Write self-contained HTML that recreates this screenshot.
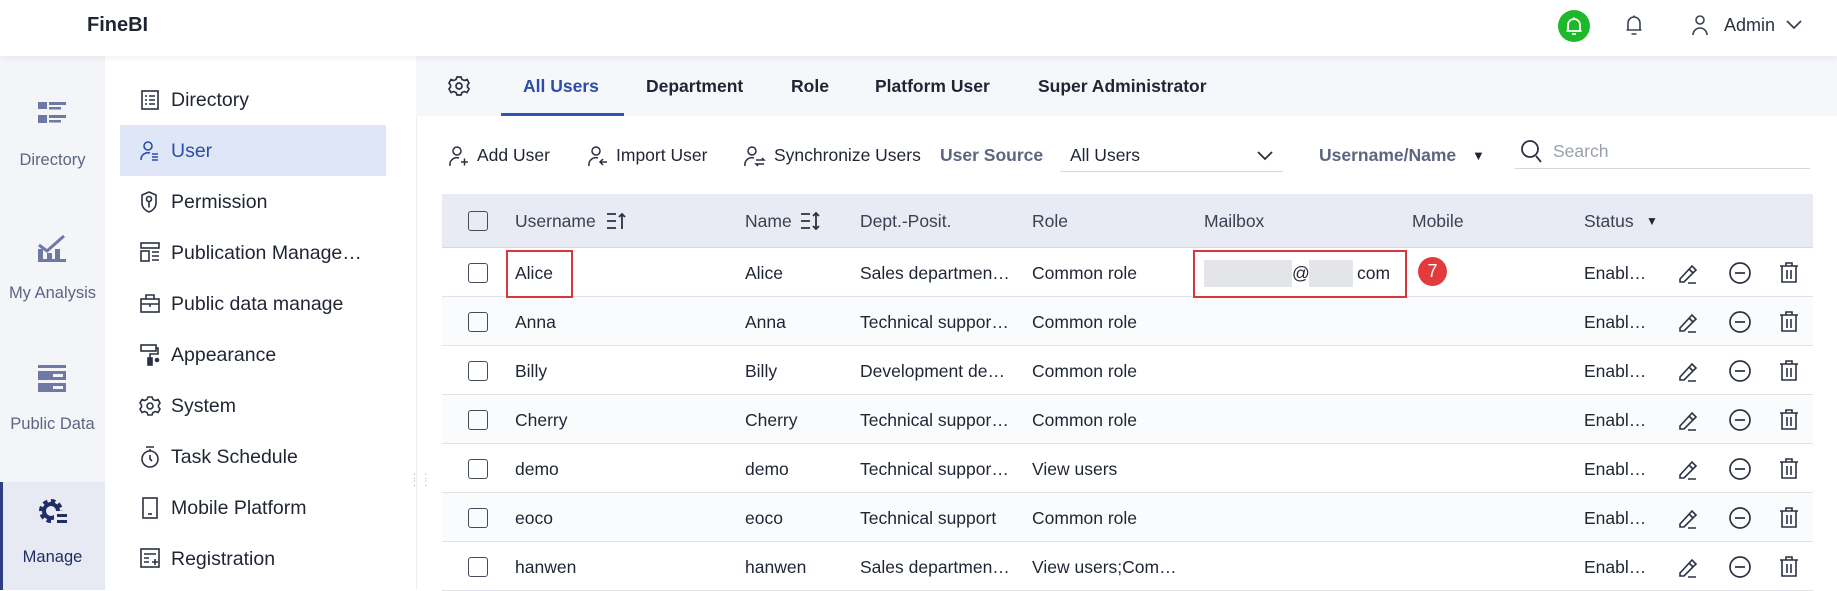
<!DOCTYPE html>
<html><head><meta charset="utf-8"><style>
*{margin:0;padding:0;box-sizing:border-box}
body{width:1837px;height:590px;overflow:hidden;background:#fff;font-family:"Liberation Sans",Arial,sans-serif;color:#1f2533;position:relative}
.a{position:absolute;white-space:nowrap}
svg{position:absolute;overflow:visible}
.hdr{left:0;top:0;width:1837px;height:56px;background:#fff;box-shadow:0 2px 6px rgba(0,0,0,.06);z-index:2}
.rail{left:0;top:56px;width:105px;height:534px;background:#f3f5f9}
.rl{font-size:16.5px;color:#5d6680;width:105px;text-align:center;left:0}
.side{left:105px;top:56px;width:311px;height:534px;background:#fff}
.si{font-size:19.5px;left:171px;color:#1f2533}
.tabs{left:416px;top:56px;width:1421px;height:60px;background:#f5f7fb}
.tab{font-size:17.5px;font-weight:bold;top:76px;color:#1f2533}
.tb{font-size:17.5px;top:145px;color:#1f2533}
.th{font-size:17.5px;color:#3a4152;top:211px}
.td{font-size:17.5px;color:#1f2533}
.cb{width:20px;height:20px;border:1.5px solid #444b5a;border-radius:3px;left:468px}
.row{left:442px;width:1371px;height:49px;border-bottom:1px solid #dfe2e8}
</style></head><body>
<div class="a hdr"></div>
<div class="a" style="left:87px;top:14px;font-size:20px;font-weight:bold;z-index:3">FineBI</div>
<div class="a" style="left:1558px;top:10px;width:32px;height:32px;border-radius:50%;background:#1fb82a;z-index:3"></div>
<svg style="left:1564px;top:16px;z-index:4" width="20" height="20" viewBox="0 0 20 20" fill="none" stroke="#fff" stroke-width="1.8"><path d="M4 15V9a6 6 0 0 1 12 0v6zM2.5 15h15M8 18h4M10 3V1.5"/></svg>
<svg style="left:1624px;top:14px;z-index:4" width="20" height="22" viewBox="0 0 20 22" fill="none" stroke="#3a4152" stroke-width="1.6"><path d="M4 16V9a6 6 0 0 1 12 0v7zM2.5 16h15M7.5 20h5M10 3V1.5"/></svg>
<svg style="left:1690px;top:14px;z-index:4" width="20" height="22" viewBox="0 0 20 22" fill="none" stroke="#3a4152" stroke-width="1.6"><circle cx="10" cy="6" r="4"/><path d="M3 21a7 7 0 0 1 14 0"/></svg>
<div class="a" style="left:1724px;top:15px;font-size:18px;color:#2b3140;z-index:4">Admin</div>
<svg style="left:1786px;top:20px;z-index:4" width="16" height="10" viewBox="0 0 16 10" fill="none" stroke="#3a4152" stroke-width="1.8"><path d="M1 1l7 7 7-7"/></svg>

<div class="a rail"></div>
<svg style="left:38px;top:102px" width="28" height="24" viewBox="0 0 28 24" fill="#6e7aa3"><rect x="0" y="0" width="9" height="7"/><rect x="11" y="0" width="17" height="3"/><rect x="11" y="5" width="12" height="2.5"/><rect x="0" y="13" width="9" height="8"/><rect x="11" y="13" width="17" height="3"/><rect x="11" y="18" width="12" height="2.5"/></svg>
<div class="a rl" style="top:151px">Directory</div>
<svg style="left:38px;top:234px" width="28" height="28" viewBox="0 0 28 28" fill="#6e7aa3"><path d="M1 11l8 6 9-8 8-7" stroke="#6e7aa3" stroke-width="3" fill="none"/><rect x="0" y="15" width="5" height="10"/><rect x="9" y="19" width="5" height="6"/><rect x="17" y="15" width="5" height="10"/><rect x="0" y="25" width="28" height="3"/></svg>
<div class="a rl" style="top:284px">My Analysis</div>
<svg style="left:38px;top:365px" width="28" height="28" viewBox="0 0 28 28" fill="#6e7aa3"><rect x="0" y="0" width="28" height="3"/><rect x="0" y="6" width="28" height="9"/><rect x="0" y="18" width="28" height="9"/><rect x="15" y="9" width="10" height="3" fill="#f3f5f9"/><rect x="15" y="21" width="10" height="3" fill="#f3f5f9"/></svg>
<div class="a rl" style="top:415px">Public Data</div>
<div class="a" style="left:0;top:482px;width:105px;height:108px;background:#e7eaf3"></div>
<div class="a" style="left:0;top:482px;width:3px;height:108px;background:#2b3f7e"></div>
<svg style="left:38px;top:498px" width="30" height="28" viewBox="0 0 30 28"><circle cx="13" cy="13" r="9" fill="none" stroke="#1f2f66" stroke-width="6" stroke-dasharray="4 3"/><circle cx="13" cy="13" r="7" fill="none" stroke="#1f2f66" stroke-width="4"/><rect x="16" y="13" width="14" height="15" fill="#e7eaf3"/><rect x="19" y="16" width="10" height="3" fill="#1f2f66"/><rect x="19" y="22" width="10" height="3" fill="#1f2f66"/></svg>
<div class="a rl" style="top:548px;color:#1f2f66">Manage</div>

<div class="a side"></div>
<div class="a" style="left:120px;top:125px;width:266px;height:51px;background:#dfe6f7"></div>
<svg style="left:141px;top:90px" width="18" height="20" viewBox="0 0 18 20" fill="none" stroke="#2b3140" stroke-width="1.6"><rect x="1" y="1" width="16" height="18"/><path d="M4 6h2M8 6h6M4 10h2M8 10h6M4 14h2M8 14h6"/></svg>
<div class="a si" style="top:89px">Directory</div>
<svg style="left:140px;top:140px" width="20" height="22" viewBox="0 0 20 22" fill="none" stroke="#2d4ea8" stroke-width="1.6"><circle cx="8" cy="6" r="4"/><path d="M1 20a7 7 0 0 1 9-7M12 14h6M12 17h6M12 20h6"/></svg>
<div class="a si" style="top:140px;color:#2d4ea8">User</div>
<svg style="left:140px;top:191px" width="18" height="22" viewBox="0 0 18 22" fill="none" stroke="#2b3140" stroke-width="1.6"><path d="M9 1l7 3v8c0 5-4 8-7 9-3-1-7-4-7-9V4z"/><circle cx="9" cy="8" r="2.5"/><path d="M9 10.5v6"/></svg>
<div class="a si" style="top:191px">Permission</div>
<svg style="left:140px;top:242px" width="20" height="20" viewBox="0 0 20 20" fill="none" stroke="#2b3140" stroke-width="1.6"><rect x="1" y="1" width="18" height="5"/><rect x="1" y="9" width="8" height="10"/><path d="M12 10h7M12 14h7M12 18h7"/></svg>
<div class="a si" style="top:242px">Publication Manage…</div>
<svg style="left:140px;top:293px" width="20" height="20" viewBox="0 0 20 20" fill="none" stroke="#2b3140" stroke-width="1.6"><rect x="1" y="6" width="18" height="13"/><path d="M6 6V2h8v4M1 11h18M10 11v3"/></svg>
<div class="a si" style="top:293px">Public data manage</div>
<svg style="left:140px;top:344px" width="20" height="22" viewBox="0 0 20 22" fill="none" stroke="#2b3140" stroke-width="1.6"><rect x="1" y="1" width="15" height="6"/><path d="M16 4h2v6h-8v4"/><rect x="8" y="14" width="4" height="7" fill="#2b3140"/><circle cx="17" cy="16" r="1.5" fill="#2b3140"/></svg>
<div class="a si" style="top:344px">Appearance</div>
<svg style="left:140px;top:396px" width="20" height="20" viewBox="0 0 20 20" fill="none" stroke="#2b3140" stroke-width="1.6"><path d="M8 1h4l1 2.5 2.5 1 2.5-1 2 3.5-1.5 2v2l1.5 2-2 3.5-2.5-1-2.5 1-1 2.5H8l-1-2.5-2.5-1-2.5 1-2-3.5 1.5-2v-2L0 7l2-3.5 2.5 1L7 3.5z"/><circle cx="10" cy="10" r="3"/></svg>
<div class="a si" style="top:395px">System</div>
<svg style="left:140px;top:446px" width="20" height="22" viewBox="0 0 20 22" fill="none" stroke="#2b3140" stroke-width="1.6"><circle cx="10" cy="13" r="8"/><path d="M6 1h8M10 3v2M10 9v4l2 2"/></svg>
<div class="a si" style="top:446px">Task Schedule</div>
<svg style="left:142px;top:497px" width="16" height="22" viewBox="0 0 16 22" fill="none" stroke="#2b3140" stroke-width="1.6"><rect x="1" y="1" width="14" height="20"/><path d="M6 17h4"/></svg>
<div class="a si" style="top:497px">Mobile Platform</div>
<svg style="left:140px;top:548px" width="20" height="20" viewBox="0 0 20 20" fill="none" stroke="#2b3140" stroke-width="1.6"><rect x="1" y="1" width="18" height="18"/><path d="M4 6h12M4 10h5M4 14h5M12 14h6M15 11v6"/></svg>
<div class="a si" style="top:548px">Registration</div>
<div class="a" style="left:416px;top:56px;width:1px;height:534px;background:#eceef2"></div>
<div class="a" style="left:413px;top:473px;font-size:10px;color:#999;line-height:7px;letter-spacing:3px">: :<br>: :</div>

<div class="a tabs"></div>
<svg style="left:449px;top:76px" width="20" height="20" viewBox="0 0 20 20" fill="none" stroke="#2b3140" stroke-width="1.7"><path d="M8 1h4l1 2.5 2.5 1 2.5-1 2 3.5-1.5 2v2l1.5 2-2 3.5-2.5-1-2.5 1-1 2.5H8l-1-2.5-2.5-1-2.5 1-2-3.5 1.5-2v-2L0 7l2-3.5 2.5 1L7 3.5z"/><circle cx="10" cy="10" r="3"/></svg>
<div class="a tab" style="left:523px;color:#2d4ea8">All Users</div>
<div class="a" style="left:501px;top:113px;width:123px;height:3px;background:#2d57b0"></div>
<div class="a tab" style="left:646px">Department</div>
<div class="a tab" style="left:791px">Role</div>
<div class="a tab" style="left:875px">Platform User</div>
<div class="a tab" style="left:1038px">Super Administrator</div>

<svg style="left:449px;top:145px" width="20" height="22" viewBox="0 0 20 22" fill="none" stroke="#2b3140" stroke-width="1.5"><circle cx="8" cy="6" r="4"/><path d="M1 21a7 7 0 0 1 9-8M12 17h7M15.5 13.5v7"/></svg>
<div class="a tb" style="left:477px">Add User</div>
<svg style="left:588px;top:145px" width="20" height="22" viewBox="0 0 20 22" fill="none" stroke="#2b3140" stroke-width="1.5"><circle cx="8" cy="6" r="4"/><path d="M1 21a7 7 0 0 1 9-8M19 17h-7M15 14l-3 3 3 3"/></svg>
<div class="a tb" style="left:616px">Import User</div>
<svg style="left:744px;top:145px" width="22" height="22" viewBox="0 0 22 22" fill="none" stroke="#2b3140" stroke-width="1.5"><circle cx="8" cy="6" r="4"/><path d="M1 21a7 7 0 0 1 9-8M12 15h8l-2-2M20 19h-8l2 2"/></svg>
<div class="a tb" style="left:774px">Synchronize Users</div>
<div class="a tb" style="left:940px;font-weight:bold;color:#5d6680">User Source</div>
<div class="a tb" style="left:1070px">All Users</div>
<svg style="left:1257px;top:151px" width="16" height="10" viewBox="0 0 16 10" fill="none" stroke="#2b3140" stroke-width="1.8"><path d="M1 1l7 7 7-7"/></svg>
<div class="a" style="left:1060px;top:171px;width:223px;height:1px;background:#d5d9e0"></div>
<div class="a tb" style="left:1319px;font-weight:bold;color:#5d6680">Username/Name</div>
<div class="a" style="left:1472px;top:148px;font-size:13px;color:#1f2533">▼</div>
<svg style="left:1521px;top:140px" width="22" height="24" viewBox="0 0 22 24" fill="none" stroke="#2b3140" stroke-width="1.8"><circle cx="9" cy="9" r="8"/><path d="M15 16l5 6"/></svg>
<div class="a tb" style="left:1553px;top:141px;color:#9aa0ab">Search</div>
<div class="a" style="left:1515px;top:168px;width:295px;height:1px;background:#d5d9e0"></div>

<div class="a" style="left:442px;top:194px;width:1371px;height:54px;background:#e8ebf3;border-bottom:1px solid #d5d9e0"></div>
<div class="a cb" style="top:211px"></div>
<div class="a th" style="left:515px">Username</div>
<svg style="left:607px;top:212px" width="20" height="18" viewBox="0 0 20 18" fill="none" stroke="#2b3140" stroke-width="1.8"><path d="M0 2h9M0 9h9M0 16h9M15 17V2M12 5l3-3 3 3"/></svg>
<div class="a th" style="left:745px">Name</div>
<svg style="left:801px;top:212px" width="20" height="18" viewBox="0 0 20 18" fill="none" stroke="#2b3140" stroke-width="1.8"><path d="M0 2h9M0 9h9M0 16h9M15 1v16M12 4l3-3 3 3M12 14l3 3 3-3"/></svg>
<div class="a th" style="left:860px">Dept.-Posit.</div>
<div class="a th" style="left:1032px">Role</div>
<div class="a th" style="left:1204px">Mailbox</div>
<div class="a th" style="left:1412px">Mobile</div>
<div class="a th" style="left:1584px">Status</div>
<div class="a" style="left:1646px;top:214px;font-size:12px">▼</div>

<div class="a row" style="top:248px;background:#fff"></div>
<div class="a row" style="top:297px;background:#fafbfc"></div>
<div class="a row" style="top:346px;background:#fff"></div>
<div class="a row" style="top:395px;background:#fafbfc"></div>
<div class="a row" style="top:444px;background:#fff"></div>
<div class="a row" style="top:493px;background:#fafbfc"></div>
<div class="a row" style="top:542px;background:#fff"></div>

<div id="rows"></div>
<script>
var d=[["Alice","Alice","Sales departmen…","Common role"],["Anna","Anna","Technical suppor…","Common role"],["Billy","Billy","Development de…","Common role"],["Cherry","Cherry","Technical suppor…","Common role"],["demo","demo","Technical suppor…","View users"],["eoco","eoco","Technical support","Common role"],["hanwen","hanwen","Sales departmen…","View users;Com…"]];
var h="";
d.forEach(function(r,i){var y=248+i*49,t=y+15;
h+='<div class="a cb" style="top:'+(y+15)+'px"></div>';
h+='<div class="a td" style="left:515px;top:'+t+'px">'+r[0]+'</div><div class="a td" style="left:745px;top:'+t+'px">'+r[1]+'</div><div class="a td" style="left:860px;top:'+t+'px">'+r[2]+'</div><div class="a td" style="left:1032px;top:'+t+'px">'+r[3]+'</div><div class="a td" style="left:1584px;top:'+t+'px">Enabl…</div>';
h+='<svg style="left:1678px;top:'+(y+14)+'px" width="22" height="22" viewBox="0 0 22 22" fill="none" stroke="#2b3140" stroke-width="1.6"><path d="M2 17L14 4l4 4L6 20H2zM11 7l4 4M10 21h8"/></svg>';
h+='<svg style="left:1729px;top:'+(y+14)+'px" width="22" height="22" viewBox="0 0 22 22" fill="none" stroke="#2b3140" stroke-width="1.7"><circle cx="11" cy="11" r="10"/><path d="M6 11h10"/></svg>';
h+='<svg style="left:1779px;top:'+(y+13)+'px" width="20" height="22" viewBox="0 0 20 22" fill="none" stroke="#2b3140" stroke-width="1.6"><path d="M1 5h18M7 5V2h6v3M3 5v16h14V5M8 9v9M12 9v9"/></svg>';
});
document.getElementById("rows").innerHTML=h;
</script>
<div class="a" style="left:506px;top:250px;width:67px;height:48px;border:2px solid #d9363e"></div>
<div class="a" style="left:1193px;top:250px;width:214px;height:48px;border:2px solid #d9363e"></div>
<div class="a" style="left:1204px;top:260px;width:88px;height:27px;background:#e4e5e8"></div>
<div class="a td" style="left:1292px;top:263px">@</div>
<div class="a" style="left:1309px;top:260px;width:44px;height:27px;background:#e4e5e8"></div>
<div class="a td" style="left:1357px;top:263px">com</div>
<div class="a" style="left:1418px;top:257px;width:29px;height:29px;border-radius:50%;background:#e33b3b;color:#fff;font-size:18px;text-align:center;line-height:29px">7</div>
</body></html>
